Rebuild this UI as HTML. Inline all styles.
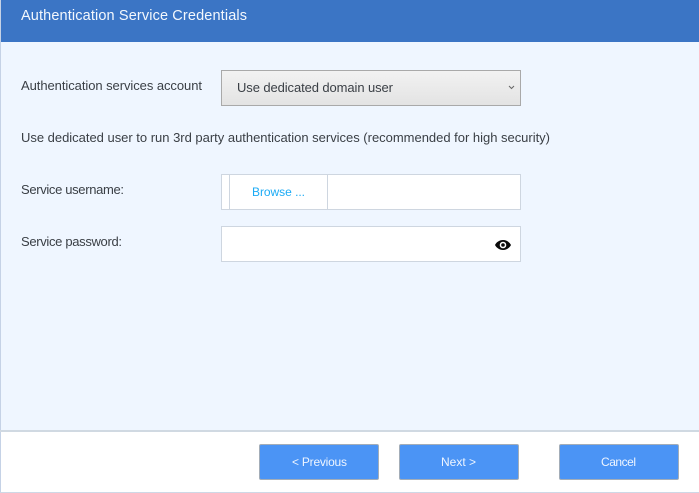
<!DOCTYPE html>
<html><head><meta charset="utf-8"><style>
html,body{margin:0;padding:0;width:699px;height:493px;overflow:hidden;background:#fff}
div{position:absolute;box-sizing:border-box}
svg{position:absolute;left:0;top:0}
text{font-family:"Liberation Sans",sans-serif;font-size:13px;fill:#3a3f45}
.b{background:#4b94f5;border:1px solid #a3adb8;border-radius:2px;width:120px;height:36px;top:444px}
</style></head><body>
<div style="left:0;top:0;width:699px;height:42px;background:#3b75c5"></div>
<div style="left:0;top:42px;width:699px;height:388px;background:#eff6ff"></div>
<div style="left:0;top:0;width:1px;height:493px;background:#c5d2e6"></div>
<div style="left:0;top:430px;width:699px;height:2px;background:#d0d9e2"></div>
<div style="left:0;top:492px;width:699px;height:1px;background:#ced8e6"></div>
<div style="left:221px;top:70px;width:300px;height:36px;border:1px solid #a9a9a9;background:linear-gradient(#f2f2f2,#e3e3e3)"></div>
<div style="left:221px;top:174px;width:300px;height:36px;border:1px solid #ced6e0;background:#fff"></div>
<div style="left:229px;top:174px;width:1px;height:36px;background:#ced6e0"></div>
<div style="left:327px;top:174px;width:1px;height:36px;background:#ced6e0"></div>
<div style="left:221px;top:226px;width:300px;height:36px;border:1px solid #ced6e0;background:#fff"></div>
<div class="b" style="left:259px"></div>
<div class="b" style="left:399px"></div>
<div class="b" style="left:559px"></div>
<svg width="699" height="493" viewBox="0 0 699 493">
<text x="21" y="20" textLength="226" style="font-size:14.5px;fill:#f4f8fd">Authentication Service Credentials</text>
<text x="21" y="90" textLength="181">Authentication services account</text>
<text x="237" y="92" textLength="156">Use dedicated domain user</text>
<text x="21" y="142" textLength="529">Use dedicated user to run 3rd party authentication services (recommended for high security)</text>
<text x="21" y="194" textLength="103">Service username:</text>
<text x="21" y="246" textLength="101">Service password:</text>
<text x="252" y="196" textLength="53" style="font-size:12px;fill:#1cabf5">Browse ...</text>
<text x="292" y="466" textLength="55" style="font-size:12px;fill:#eef5ff">&lt; Previous</text>
<text x="441" y="466" textLength="35" style="font-size:12px;fill:#eef5ff">Next &gt;</text>
<text x="601" y="466" textLength="35" style="font-size:12px;fill:#eef5ff">Cancel</text>
<path d="M509 86l2.500 2.500 2.500-2.500" fill="none" stroke="#666" stroke-width="1"/>
<path fill="#0a0a0a" fill-rule="evenodd" d="M503 240c3.600 0 6.600 2.200 8 5-1.400 2.800-4.400 5-8 5s-6.600-2.200-8-5c1.400-2.800 4.400-5 8-5zm0 1.700a3.300 3.300 0 1 0 0 6.600 3.300 3.300 0 0 0 0-6.600zm0 1.500a1.800 1.800 0 1 1 0 3.600 1.800 1.800 0 0 1 0-3.600z"/>
</svg>
</body></html>
